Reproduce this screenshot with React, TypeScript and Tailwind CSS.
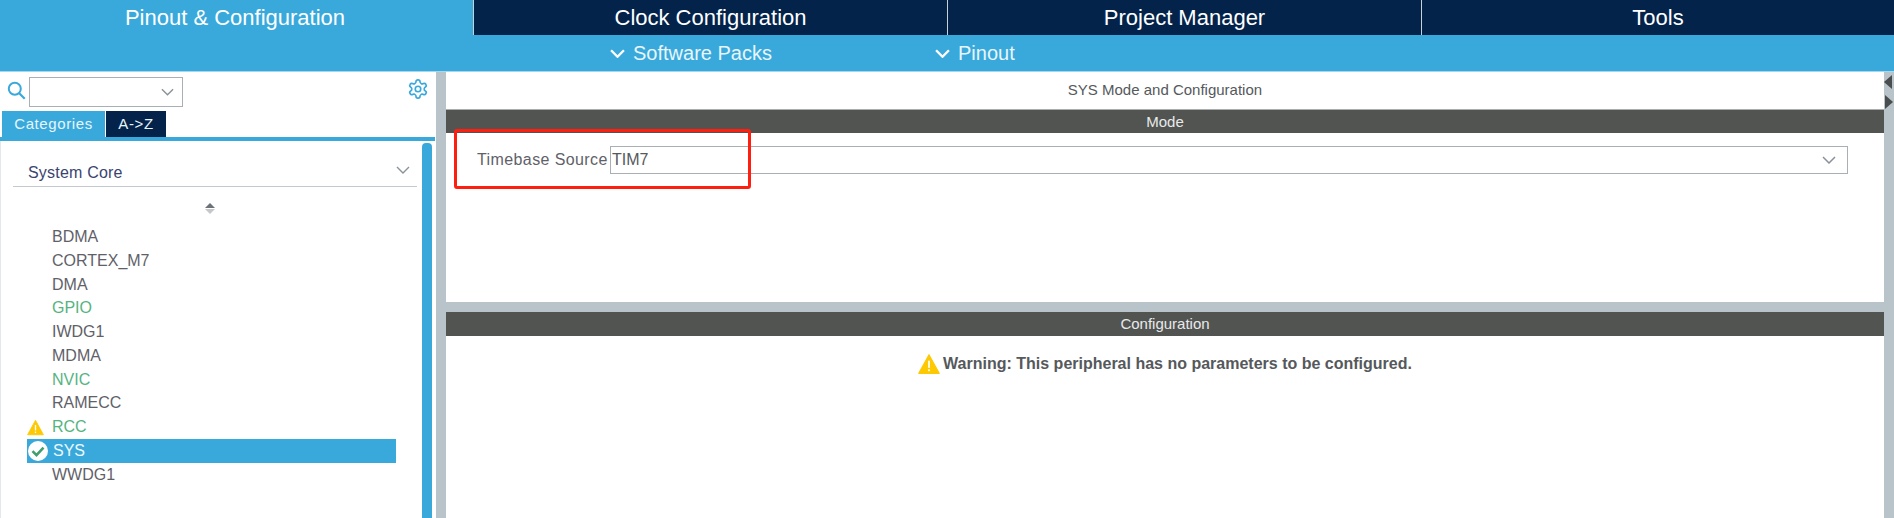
import React from "react";

function Chevron({ className = "", color = "#8a9299", w = 14, h = 8, sw = 1.6 }: { className?: string; color?: string; w?: number; h?: number; sw?: number }) {
  return (
    <svg className={className} width={w} height={h} viewBox="0 0 14 8" fill="none">
      <path d="M1 1l6 6 6-6" stroke={color} strokeWidth={sw} />
    </svg>
  );
}

function Warn({ size = 17 }: { size?: number }) {
  return (
    <svg width={size} height={size} viewBox="0 0 20 20">
      <path d="M10 1.5L19.3 18.5H.7z" fill="#fdc903" stroke="#fdc903" strokeWidth="1" strokeLinejoin="round" />
      <rect x="9.2" y="7" width="1.6" height="6.5" fill="#fff" />
      <rect x="9.2" y="14.8" width="1.6" height="1.7" fill="#fff" />
    </svg>
  );
}

const items = [
  ["BDMA", "n"],
  ["CORTEX_M7", "n"],
  ["DMA", "n"],
  ["GPIO", "g"],
  ["IWDG1", "n"],
  ["MDMA", "n"],
  ["NVIC", "g"],
  ["RAMECC", "n"],
  ["RCC", "w"],
  ["SYS", "s"],
  ["WWDG1", "n"],
];

export default function App() {
  return (
    <div className="w-[1894px] h-[518px] overflow-hidden bg-white flex flex-col font-['Liberation_Sans',sans-serif] relative">
      <div className="flex h-[35px] shrink-0 bg-[#03234b] text-white text-[22px] leading-[35px]">
        <div className="w-[473px] bg-[#39a9dc] text-center pr-[3px]">Pinout &amp; Configuration</div>
        <div className="w-[474px] border-l border-[#c9d1d8] text-center">Clock Configuration</div>
        <div className="w-[474px] border-l border-[#c9d1d8] text-center">Project Manager</div>
        <div className="flex-1 border-l border-[#c9d1d8] text-center">Tools</div>
      </div>
      <div className="h-[37px] shrink-0 bg-[#39a9dc] border-b border-[#a5d8ef] text-[#e8f5fb] text-[20px] flex items-center pl-[610px]">
        <Chevron color="#fff" w={15} h={9} sw={2.2} />
        <span className="ml-[8px] w-[302px]">Software Packs</span>
        <Chevron color="#fff" w={15} h={9} sw={2.2} />
        <span className="ml-[8px]">Pinout</span>
      </div>
      <div className="flex-1 flex min-h-0">
        <div className="w-[436px] shrink-0 flex flex-col min-h-0">
          <div className="h-[39px] shrink-0 flex items-center pl-[7px] pr-[8px]">
            <svg width="19" height="19" viewBox="0 0 19 19" fill="none" className="mt-[-2px]">
              <circle cx="7.8" cy="7.8" r="6" stroke="#39a9dc" strokeWidth="2" />
              <path d="M12.2 12.2l5.5 5.5" stroke="#39a9dc" strokeWidth="2.2" />
            </svg>
            <div className="ml-[3px] w-[154px] h-[30px] border border-[#a8b0b6] flex items-center justify-end pr-[8px]">
              <Chevron w={13} h={8} sw={1.5} />
            </div>
            <svg width="22" height="22" viewBox="0 0 24 24" fill="none" stroke="#39a9dc" strokeWidth="1.8" className="ml-auto mt-[-5px] mr-[-1px]">
              <path d="M12.2 2h-.4a2 2 0 0 0-2 2v.2a2 2 0 0 1-1 1.7l-.4.3a2 2 0 0 1-2 0l-.2-.1a2 2 0 0 0-2.7.7l-.2.4a2 2 0 0 0 .7 2.7l.2.1a2 2 0 0 1 1 1.7v.5a2 2 0 0 1-1 1.8l-.2.1a2 2 0 0 0-.7 2.7l.2.4a2 2 0 0 0 2.7.7l.2-.1a2 2 0 0 1 2 0l.4.3a2 2 0 0 1 1 1.7v.2a2 2 0 0 0 2 2h.4a2 2 0 0 0 2-2v-.2a2 2 0 0 1 1-1.7l.4-.3a2 2 0 0 1 2 0l.2.1a2 2 0 0 0 2.7-.7l.2-.4a2 2 0 0 0-.7-2.7l-.2-.1a2 2 0 0 1-1-1.8v-.5a2 2 0 0 1 1-1.7l.2-.1a2 2 0 0 0 .7-2.7l-.2-.4a2 2 0 0 0-2.7-.7l-.2.1a2 2 0 0 1-2 0l-.4-.3a2 2 0 0 1-1-1.7V4a2 2 0 0 0-2-2z" />
              <circle cx="12" cy="12" r="3" />
            </svg>
          </div>
          <div className="flex pl-[2px] h-[26px] shrink-0 text-[15px] leading-[26px] tracking-[0.6px]">
            <div className="w-[103px] bg-[#39a9dc] text-[#e8f5fb] text-center">Categories</div>
            <div className="ml-[1px] w-[60px] bg-[#03234b] text-[#e8f5fb] text-center">A-&gt;Z</div>
          </div>
          <div className="h-[4px] shrink-0 bg-[#39a9dc] w-[435px]" />
          <div className="flex-1 flex min-h-0 border-l border-[#e4e8ea]">
            <div className="w-[421px] shrink-0 pt-[22px]">
              <div className="ml-[12px] w-[397px] h-[23px] border-b border-[#c4cacd] box-content flex items-start justify-between pr-[7px]">
                <span className="pl-[15px] text-[16px] leading-[19px] text-[#3a4470] tracking-[0.2px]">System Core</span>
                <Chevron className="mt-[3px]" w={14} h={8} sw={1.4} />
              </div>
              <div className="ml-[203px] mt-[16px] h-[14px] flex flex-col items-center w-[12px] gap-[1px]">
                <div className="w-0 h-0 border-x-[5px] border-x-transparent border-b-[5px] border-b-[#6b7378]" />
                <div className="w-0 h-0 border-x-[5px] border-x-transparent border-t-[5px] border-t-[#c4c8cb]" />
              </div>
              <div className="mt-[8px] text-[16px]">
                {items.map(([name, kind]) => (
                  <div
                    key={name}
                    className={
                      kind === "s"
                        ? "ml-[26px] w-[369px] h-[23.8px] flex items-center bg-[#39a9dc] text-[#eef8fc]"
                        : "ml-[26px] w-[369px] h-[23.8px] flex items-center"
                    }
                  >
                    {kind === "s" ? (
                      <>
                        <svg width="20" height="20" viewBox="0 0 20 20" className="ml-[1px]">
                          <circle cx="10" cy="10" r="10" fill="#fff" />
                          <path d="M4.5 10.2l4 4 7-7.5" stroke="#3f9f6d" strokeWidth="2.6" fill="none" />
                        </svg>
                        <span className="ml-[5px]">{name}</span>
                      </>
                    ) : kind === "w" ? (
                      <>
                        <Warn />
                        <span className="ml-[8px] text-[#55b47f]">{name}</span>
                      </>
                    ) : (
                      <span className={kind === "g" ? "ml-[25px] text-[#55b47f]" : "ml-[25px] text-[#5f6169]"}>{name}</span>
                    )}
                  </div>
                ))}
              </div>
            </div>
            <div className="w-[10px] mt-[2px] bg-[#39a9dc] rounded-t-[4px]" />
          </div>
        </div>
        <div className="w-[10px] shrink-0 bg-[#b8c4ca]" />
        <div className="flex-1 flex flex-col min-w-0">
          <div className="h-[230px] shrink-0 flex flex-col">
            <div className="h-[37px] shrink-0 text-center text-[15px] leading-[36px] text-[#55595c]">SYS Mode and Configuration</div>
            <div className="h-[24px] shrink-0 bg-[#525452] border-t border-[#a9adad] text-center text-[#e8eaea] text-[15px] leading-[23px]">Mode</div>
            <div className="flex items-center pl-[31px] pr-[36px] mt-[13px] text-[16px]">
              <span className="text-[#5f6169] tracking-[0.4px] w-[133px] shrink-0">Timebase Source</span>
              <div className="flex-1 h-[28px] border border-[#a8b0b6] flex items-center justify-between pl-[1px] pr-[11px] text-[#55595c]">
                <span>TIM7</span>
                <Chevron w={14} h={8} sw={1.5} />
              </div>
            </div>
          </div>
          <div className="h-[10px] shrink-0 bg-[#b8c4ca]" />
          <div className="h-[24px] shrink-0 bg-[#525452] text-center text-[#e8eaea] text-[15px] leading-[23px]">Configuration</div>
          <div className="flex items-center justify-center mt-[16px] text-[16px] font-bold text-[#55595c]">
            <Warn size={22} />
            <span className="ml-[3px]">Warning: This peripheral has no parameters to be configured.</span>
          </div>
        </div>
        <div className="w-[10px] shrink-0 bg-[#b8c4ca] relative">
          <div className="absolute left-0 top-[3px] w-0 h-0 border-y-[7px] border-y-transparent border-r-[8px] border-r-[#4a4d4e]" />
          <div className="absolute left-[1px] top-[23px] w-0 h-0 border-y-[7px] border-y-transparent border-l-[8px] border-l-[#4a4d4e]" />
        </div>
      </div>
      <div className="absolute left-[454px] top-[129px] w-[297px] h-[60px] border-[3px] border-[#ff1f10] rounded-[3px]" />
    </div>
  );
}
